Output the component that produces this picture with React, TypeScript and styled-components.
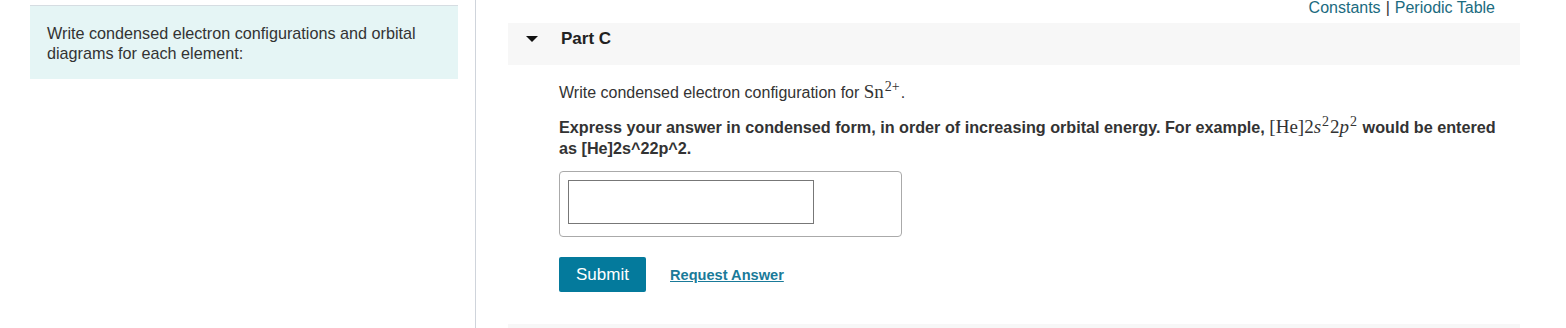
import styled, { createGlobalStyle } from 'styled-components'

const GlobalStyle = createGlobalStyle`
	html, body {
		margin: 0;
		padding: 0;
		background: #fff;
	}
	body {
		font-family: 'Liberation Sans', Arial, sans-serif;
		color: #333;
	}
`

const Page = styled.div`
	display: flex;
	height: 328px;
	overflow: hidden;
`

const LeftColumn = styled.div`
	width: 428px;
	padding: 5px 17px 0 30px;
	border-right: 1px solid #cfd4db;
	flex-shrink: 0;
`

const Intro = styled.div`
	background: #e5f5f5;
	border-top: 1px solid #d6dde2;
	padding: 17px 17px 16px 17px;
	font-size: 16.2px;
	line-height: 20px;
	color: #333;
`

const RightColumn = styled.div`
	flex: 1;
	padding: 0 46px 0 32px;
`

const LinksRow = styled.div`
	display: flex;
	justify-content: flex-end;
	padding-right: 25px;
	height: 23px;
	font-size: 16px;
	line-height: 16px;
	color: #333;
`

const Link = styled.a`
	color: #1b6b80;
	text-decoration: none;
`

const Sep = styled.span`
	margin: 0 5px;
`

const PartHeader = styled.div`
	display: flex;
	align-items: flex-start;
	height: 42px;
	box-sizing: border-box;
	padding: 6px 0 0 18px;
	background: #f7f7f7;
	font-size: 17px;
	line-height: 20px;
	font-weight: bold;
	color: #222;
`

const Caret = styled.span`
	width: 0;
	height: 0;
	border-left: 6px solid transparent;
	border-right: 6px solid transparent;
	border-top: 6px solid #111;
	margin: 7px 23px 0 0;
`

const PartBody = styled.div`
	padding: 16px 0 0 51px;
`

const Prompt = styled.p`
	margin: 0;
	font-size: 16px;
	line-height: 22px;
	color: #333;
`

const Math = styled.span`
	font-family: 'Liberation Serif', 'Times New Roman', serif;
	font-size: 19px;
	font-weight: normal;
`

const MathItalic = styled(Math)`
	font-style: italic;
`

const Sup = styled.sup`
	font-family: 'Liberation Serif', 'Times New Roman', serif;
	font-weight: normal;
	font-size: 14px;
	line-height: 0;
	vertical-align: 7px;
	margin-left: 1px;
	margin-right: 1px;
`

const Instructions = styled.p`
	margin: 12px 0 0;
	font-size: 16.2px;
	font-weight: bold;
	line-height: 21px;
	color: #333;
	max-width: 945px;
`

const AnswerBox = styled.div`
	margin-top: 12px;
	width: 325px;
	height: 48px;
	padding: 8px;
	border: 1px solid #aaa;
	border-radius: 4px;
`

const AnswerInput = styled.input`
	box-sizing: border-box;
	width: 246px;
	height: 44px;
	border: 1px solid #777;
	border-radius: 0;
	font-size: 16px;
	padding: 0 6px;
	outline: none;
`

const Actions = styled.div`
	display: flex;
	align-items: center;
	gap: 24px;
	margin-top: 20px;
`

const SubmitButton = styled.button`
	width: 87px;
	height: 35px;
	background: #047a9c;
	color: #fff;
	border: none;
	border-radius: 2px;
	font-family: 'Liberation Sans', Arial, sans-serif;
	font-size: 17px;
	cursor: pointer;
`

const RequestLink = styled.a`
	font-size: 14.6px;
	font-weight: bold;
	color: #1a7a99;
	text-decoration: underline;
	cursor: pointer;
`

const NextPart = styled.div`
	margin-top: 32px;
	height: 20px;
	background: #f7f7f7;
`

export default function App() {
	return (
		<>
			<GlobalStyle />
			<Page>
				<LeftColumn>
					<Intro>
						Write condensed electron configurations and orbital diagrams for each element:
					</Intro>
				</LeftColumn>
				<RightColumn>
					<LinksRow>
						<Link>Constants</Link>
						<Sep>|</Sep>
						<Link>Periodic Table</Link>
					</LinksRow>
					<PartHeader>
						<Caret />
						Part C
					</PartHeader>
					<PartBody>
						<Prompt>
							Write condensed electron configuration for{' '}
							<Math>
								Sn<Sup>2+</Sup>
							</Math>
							.
						</Prompt>
						<Instructions>
							Express your answer in condensed form, in order of increasing orbital energy. For
							example, <Math>[He]2</Math>
							<MathItalic>s</MathItalic>
							<Sup>2</Sup>
							<Math>2</Math>
							<MathItalic>p</MathItalic>
							<Sup>2</Sup> would be entered as [He]2s^22p^2.
						</Instructions>
						<AnswerBox>
							<AnswerInput type="text" />
						</AnswerBox>
						<Actions>
							<SubmitButton>Submit</SubmitButton>
							<RequestLink>Request Answer</RequestLink>
						</Actions>
					</PartBody>
					<NextPart />
				</RightColumn>
			</Page>
		</>
	)
}
